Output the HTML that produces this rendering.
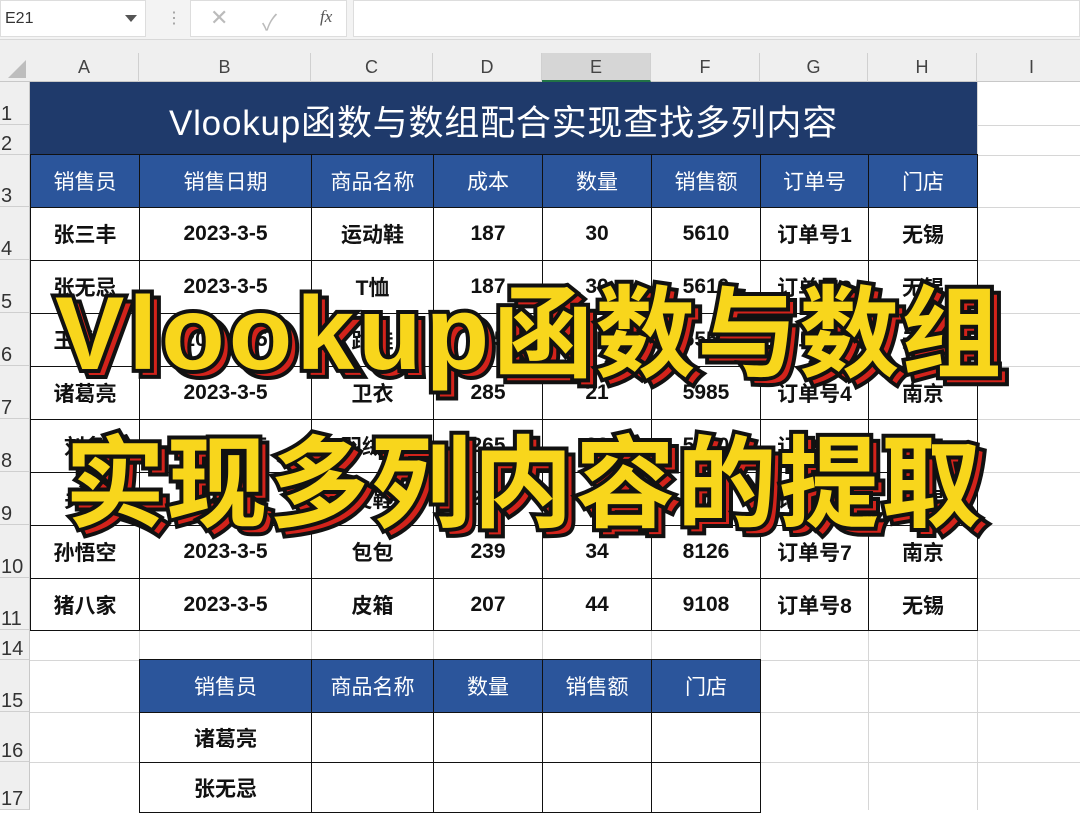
<!DOCTYPE html>
<html><head><meta charset="utf-8"><style>
*{margin:0;padding:0;box-sizing:border-box}
body{width:1080px;height:810px;overflow:hidden;background:#fff;position:relative;font-family:"Liberation Sans","Noto Sans CJK SC",sans-serif}
.abs{position:absolute}
.fbar{left:0;top:0;width:1080px;height:40px;background:#f3f3f3;border-bottom:1px solid #d8d8d8}
.namebox{left:0;top:0;width:146px;height:37px;background:#fff;border:1px solid #ddd;font-size:16px;color:#333;padding:9px 4px}
.colhdr{top:40px;height:42px;background:#efefef;border-bottom:1px solid #c8c8c8}
.ch{position:absolute;top:53px;height:29px;font-size:18px;color:#444;text-align:center;line-height:29px;border-right:1px solid #d0d0d0}
.rh{position:absolute;left:0;width:30px;background:#efefef;border-bottom:1px solid #cfcfcf;border-right:1px solid #c8c8c8;font-size:20px;color:#333;padding-left:1px;display:flex;align-items:flex-end;line-height:1}
.grid{position:absolute;display:grid;border-top:1.5px solid #111;border-left:1.5px solid #111}
.grid div{border-right:1.5px solid #111;border-bottom:1.5px solid #111;display:flex;align-items:center;justify-content:center;font-size:21px;font-weight:bold;color:#111}
.grid div.h{background:#2b559b;color:#fff;font-weight:normal}
.vl{position:absolute;top:82px;width:1px;height:728px;background:#d6d6d6}
.hl{position:absolute;left:30px;width:1050px;height:1px;background:#d6d6d6}
.ov{position:absolute;font-weight:bold;color:#f8d61c;-webkit-text-stroke:8px #111;paint-order:stroke fill;white-space:nowrap;font-family:"Liberation Sans","Noto Sans CJK SC",sans-serif}
.sh{color:#d2231b}
</style></head><body>
<div class="abs fbar"></div>
<div class="abs namebox">E21<span style="position:absolute;right:8px;top:14px;border-left:6px solid transparent;border-right:6px solid transparent;border-top:7px solid #555"></span></div>
<div class="abs" style="left:166px;top:8px;color:#999;font-size:16px">⋮</div>
<div class="abs" style="left:190px;top:0;width:157px;height:37px;background:#fff;border:1px solid #ddd"></div>
<div class="abs" style="left:210px;top:5px;color:#bbb;font-size:22px">✕</div>
<div class="abs" style="left:262px;top:5px;color:#bbb;font-size:22px">✓</div>
<div class="abs" style="left:320px;top:7px;color:#555;font-size:17px;font-style:italic;font-family:'Liberation Serif',serif">fx</div>
<div class="abs" style="left:353px;top:0;width:727px;height:37px;background:#fff;border:1px solid #ddd"></div>
<div class="abs colhdr" style="left:0;width:1080px"></div>
<div class="abs" style="left:8px;top:60px;width:0;height:0;border-left:18px solid transparent;border-bottom:18px solid #bdbdbd"></div>
<div class="ch" style="left:30px;width:109px">A</div>
<div class="ch" style="left:139px;width:172px">B</div>
<div class="ch" style="left:311px;width:122px">C</div>
<div class="ch" style="left:433px;width:109px">D</div>
<div class="ch" style="left:542px;width:109px;background:#d6d6d6;border-bottom:2px solid #217346">E</div>
<div class="ch" style="left:651px;width:109px">F</div>
<div class="ch" style="left:760px;width:108px">G</div>
<div class="ch" style="left:868px;width:109px">H</div>
<div class="ch" style="left:977px;width:110px">I</div>

<div class="rh" style="top:82px;height:43px">1</div>
<div class="rh" style="top:125px;height:30px">2</div>
<div class="rh" style="top:155px;height:52px">3</div>
<div class="rh" style="top:207px;height:53px">4</div>
<div class="rh" style="top:260px;height:53px">5</div>
<div class="rh" style="top:313px;height:53px">6</div>
<div class="rh" style="top:366px;height:53px">7</div>
<div class="rh" style="top:419px;height:53px">8</div>
<div class="rh" style="top:472px;height:53px">9</div>
<div class="rh" style="top:525px;height:53px">10</div>
<div class="rh" style="top:578px;height:52px">11</div>
<div class="rh" style="top:630px;height:30px">14</div>
<div class="rh" style="top:660px;height:52px">15</div>
<div class="rh" style="top:712px;height:50px">16</div>
<div class="rh" style="top:762px;height:48px">17</div>

<div class="vl" style="left:139px"></div><div class="vl" style="left:311px"></div><div class="vl" style="left:433px"></div><div class="vl" style="left:542px"></div><div class="vl" style="left:651px"></div><div class="vl" style="left:760px"></div><div class="vl" style="left:868px"></div><div class="vl" style="left:977px"></div>
<div class="hl" style="top:125px"></div><div class="hl" style="top:155px"></div><div class="hl" style="top:207px"></div><div class="hl" style="top:260px"></div><div class="hl" style="top:313px"></div><div class="hl" style="top:366px"></div><div class="hl" style="top:419px"></div><div class="hl" style="top:472px"></div><div class="hl" style="top:525px"></div><div class="hl" style="top:578px"></div><div class="hl" style="top:630px"></div><div class="hl" style="top:660px"></div><div class="hl" style="top:712px"></div><div class="hl" style="top:762px"></div>

<div class="abs" style="left:30px;top:82px;width:947px;height:74px;background:#1f3a6b;color:#fff;font-size:35px;display:flex;align-items:center;justify-content:center;padding-top:2px;letter-spacing:0.8px">Vlookup函数与数组配合实现查找多列内容</div>

<div class="grid" style="left:30px;top:154px;grid-template-columns:109px 172px 122px 109px 109px 109px 108px 109px;grid-template-rows:53px 53px 53px 53px 53px 53px 53px 53px 52px">
<div class="h">销售员</div><div class="h">销售日期</div><div class="h">商品名称</div><div class="h">成本</div><div class="h">数量</div><div class="h">销售额</div><div class="h">订单号</div><div class="h">门店</div>
<div>张三丰</div><div>2023-3-5</div><div>运动鞋</div><div>187</div><div>30</div><div>5610</div><div>订单号1</div><div>无锡</div>
<div>张无忌</div><div>2023-3-5</div><div>T恤</div><div>187</div><div>30</div><div>5610</div><div>订单号2</div><div>无锡</div>
<div>王重阳</div><div>2023-3-5</div><div>跑鞋</div><div>185</div><div>30</div><div>5550</div><div>订单号3</div><div>无锡</div>
<div>诸葛亮</div><div>2023-3-5</div><div>卫衣</div><div>285</div><div>21</div><div>5985</div><div>订单号4</div><div>南京</div>
<div>刘备</div><div>2023-3-5</div><div>羽绒服</div><div>265</div><div>22</div><div>5830</div><div>订单号5</div><div>南京</div>
<div>关羽</div><div>2023-3-5</div><div>皮鞋</div><div>245</div><div>25</div><div>6125</div><div>订单号6</div><div>无锡</div>
<div>孙悟空</div><div>2023-3-5</div><div>包包</div><div>239</div><div>34</div><div>8126</div><div>订单号7</div><div>南京</div>
<div>猪八家</div><div>2023-3-5</div><div>皮箱</div><div>207</div><div>44</div><div>9108</div><div>订单号8</div><div>无锡</div>
</div>

<div class="grid" style="left:139px;top:659px;grid-template-columns:172px 122px 109px 109px 109px;grid-template-rows:53px 50px 50px">
<div class="h">销售员</div><div class="h">商品名称</div><div class="h">数量</div><div class="h">销售额</div><div class="h">门店</div>
<div>诸葛亮</div><div></div><div></div><div></div><div></div>
<div>张无忌</div><div></div><div></div><div></div><div></div>
</div>

<div class="ov sh" style="left:62px;top:259px;font-size:100px;letter-spacing:2px"><span style="font-size:104px;letter-spacing:4px">Vlookup</span>函数与数组</div>
<div class="ov" style="left:55px;top:253px;font-size:100px;letter-spacing:2px"><span style="font-size:104px;letter-spacing:4px">Vlookup</span>函数与数组</div>
<div class="ov sh" style="left:72px;top:409px;font-size:100px;letter-spacing:2px">实现多列内容的提取</div>
<div class="ov" style="left:65px;top:403px;font-size:100px;letter-spacing:2px">实现多列内容的提取</div>
</body></html>
